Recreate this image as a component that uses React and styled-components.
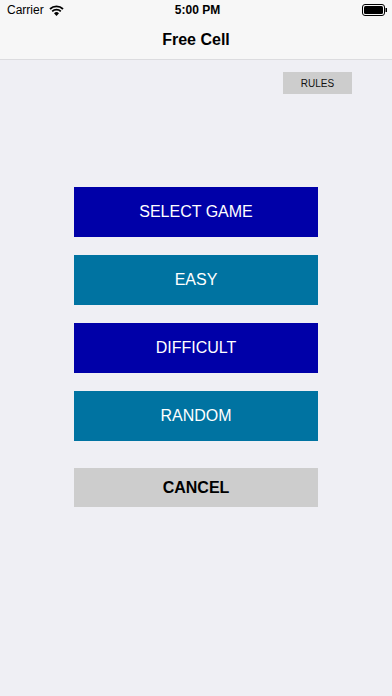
import React from "react";
import styled, { createGlobalStyle } from "styled-components";

const Global = createGlobalStyle`
  html, body {
    margin: 0;
    padding: 0;
    background: #efeff4;
    font-family: "Liberation Sans", Arial, sans-serif;
  }
`;

const Screen = styled.div`
  width: 392px;
  height: 696px;
  background: #efeff4;
  display: flex;
  flex-direction: column;
`;

const Header = styled.header`
  background: #f7f7f7;
  border-bottom: 1px solid #dcdcdf;
  height: 59px;
  display: flex;
  flex-direction: column;
`;

const StatusBar = styled.div`
  height: 20px;
  display: grid;
  grid-template-columns: 1fr auto 1fr;
  align-items: center;
  padding: 0 4px 0 7px;
  font-size: 12px;
  color: #000;
  .left {
    display: flex;
    align-items: center;
    gap: 5px;
  }
  .time {
    font-weight: bold;
    font-size: 12px;
  }
  .right {
    display: flex;
    justify-content: flex-end;
  }
`;

const Title = styled.div`
  flex: 1;
  display: flex;
  align-items: center;
  justify-content: center;
  font-weight: bold;
  font-size: 16px;
  color: #000;
`;

const Body = styled.main`
  display: flex;
  flex-direction: column;
  align-items: center;
`;

const TopRow = styled.div`
  width: 100%;
  display: flex;
  justify-content: flex-end;
  padding: 12px 40px 0 0;
  box-sizing: border-box;
`;

const SmallButton = styled.button`
  width: 69px;
  height: 22px;
  background: #cdcdcd;
  border: none;
  font-family: inherit;
  font-size: 10px;
  color: #111;
  padding: 0;
`;

const Menu = styled.div`
  margin-top: 93px;
  display: flex;
  flex-direction: column;
  gap: 18px;
  width: 244px;
`;

const MenuButton = styled.button`
  height: 50px;
  width: 100%;
  border: none;
  background: ${(p) => p.$bg};
  color: #fff;
  font-family: inherit;
  font-size: 16px;
  padding: 0;
`;

const CancelButton = styled.button`
  margin-top: 9px;
  height: 39px;
  width: 100%;
  border: none;
  background: #cdcdcd;
  color: #000;
  font-family: inherit;
  font-weight: bold;
  font-size: 16px;
  padding: 0;
`;

const Wifi = () => (
  <svg width="15" height="11" viewBox="0 0 15 11">
    <path d="M7.5 11 L5 8.3 A3.6 3.6 0 0 1 10 8.3 Z" fill="#000" />
    <path d="M3.2 6.4 A6.2 6.2 0 0 1 11.8 6.4" stroke="#000" strokeWidth="1.8" fill="none" />
    <path d="M1 4 A9.4 9.4 0 0 1 14 4" stroke="#000" strokeWidth="1.8" fill="none" />
  </svg>
);

const Battery = () => (
  <svg width="26" height="12" viewBox="0 0 26 12">
    <rect x="0.5" y="0.5" width="22" height="11" rx="2.5" fill="none" stroke="#000" />
    <rect x="2" y="2" width="19" height="8" rx="1.5" fill="#000" />
    <rect x="23.5" y="4" width="1.5" height="4" fill="#000" />
  </svg>
);

export default function App() {
  return (
    <Screen>
      <Global />
      <Header>
        <StatusBar>
          <div className="left">
            Carrier <Wifi />
          </div>
          <div className="time">5:00 PM</div>
          <div className="right">
            <Battery />
          </div>
        </StatusBar>
        <Title>Free Cell</Title>
      </Header>
      <Body>
        <TopRow>
          <SmallButton>RULES</SmallButton>
        </TopRow>
        <Menu>
          <MenuButton $bg="#0000a8">SELECT GAME</MenuButton>
          <MenuButton $bg="#0073a1">EASY</MenuButton>
          <MenuButton $bg="#0000a8">DIFFICULT</MenuButton>
          <MenuButton $bg="#0073a1">RANDOM</MenuButton>
          <CancelButton>CANCEL</CancelButton>
        </Menu>
      </Body>
    </Screen>
  );
}
